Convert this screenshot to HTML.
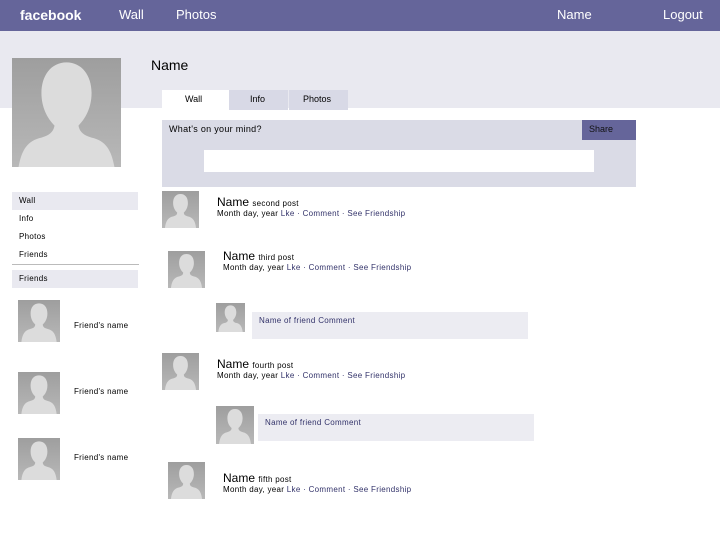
<!DOCTYPE html><html><head><style>
body{margin:0;width:720px;height:540px;position:relative;background:#fff;font-family:"Liberation Sans",sans-serif;overflow:hidden}
div,span{position:absolute}
.t{white-space:nowrap;color:#000}
.av{background:linear-gradient(#9e9e9e,#b8b8b8);overflow:hidden}
.av svg{width:100%;height:100%;display:block}
.s{font-size:8px;letter-spacing:.3px}
.l{color:#33336a}
</style></head><body>
<div style="left:0;top:0;width:720px;height:31px;background:#65659a"></div>
<div class="t" style="left:20px;top:7px;font-size:14px;font-weight:bold;color:#fff">facebook</div>
<div class="t" style="left:119px;top:7px;font-size:13px;color:#fff">Wall</div>
<div class="t" style="left:176px;top:7px;font-size:13px;color:#fff">Photos</div>
<div class="t" style="left:557px;top:7px;font-size:13px;color:#fff">Name</div>
<div class="t" style="left:663px;top:7px;font-size:13px;color:#fff">Logout</div>
<div style="left:0;top:31px;width:720px;height:77px;background:#e9e9f0"></div>
<div class="t" style="left:151px;top:57px;font-size:14px">Name</div>
<div style="left:162px;top:90px;width:67px;height:20px;background:#fff"></div>
<div style="left:229px;top:90px;width:59px;height:20px;background:#d8d9e6"></div>
<div style="left:289px;top:90px;width:59px;height:20px;background:#d8d9e6"></div>
<div class="t" style="left:185px;top:94px;font-size:9px">Wall</div>
<div class="t" style="left:250px;top:94px;font-size:9px">Info</div>
<div class="t" style="left:303px;top:94px;font-size:9px">Photos</div>
<div style="left:162px;top:120px;width:474px;height:67px;background:#dadbe6"></div>
<div class="t" style="left:169px;top:124px;font-size:9px;letter-spacing:.3px">What's on your mind?</div>
<div style="left:582px;top:120px;width:54px;height:20px;background:#65659a"></div>
<div class="t" style="left:589px;top:124px;font-size:9px;color:#111">Share</div>
<div style="left:204px;top:150px;width:390px;height:22px;background:#fff"></div>

<div style="left:12px;top:192px;width:126px;height:18px;background:#e9e9f0"></div>
<div class="t s" style="left:19px;top:196px">Wall</div>
<div class="t s" style="left:19px;top:214px">Info</div>
<div class="t s" style="left:19px;top:232px">Photos</div>
<div class="t s" style="left:19px;top:250px">Friends</div>
<div style="left:12px;top:264px;width:127px;height:1px;background:#bbb"></div>
<div style="left:12px;top:270px;width:126px;height:18px;background:#e9e9f0"></div>
<div class="t s" style="left:19px;top:274px">Friends</div>
<div class="t s" style="left:74px;top:321px">Friend's name</div>
<div class="t s" style="left:74px;top:387px">Friend's name</div>
<div class="t s" style="left:74px;top:453px">Friend's name</div>

<div style="left:252px;top:312px;width:276px;height:27px;background:#ececf2"></div>
<div style="left:258px;top:414px;width:276px;height:27px;background:#ececf2"></div>
<div class="t s l" style="left:259px;top:316px">Name of friend Comment</div>
<div class="t s l" style="left:265px;top:418px">Name of friend Comment</div>

<div class="t" style="left:217px;top:195px;font-size:12px">Name <span class="s" style="position:static">second post</span></div>
<div class="t s" style="left:217px;top:209px">Month day, year <span class="l" style="position:static">Lke · Comment · See Friendship</span></div>
<div class="t" style="left:223px;top:249px;font-size:12px">Name <span class="s" style="position:static">third post</span></div>
<div class="t s" style="left:223px;top:263px">Month day, year <span class="l" style="position:static">Lke · Comment · See Friendship</span></div>
<div class="t" style="left:217px;top:357px;font-size:12px">Name <span class="s" style="position:static">fourth post</span></div>
<div class="t s" style="left:217px;top:371px">Month day, year <span class="l" style="position:static">Lke · Comment · See Friendship</span></div>
<div class="t" style="left:223px;top:471px;font-size:12px">Name <span class="s" style="position:static">fifth post</span></div>
<div class="t s" style="left:223px;top:485px">Month day, year <span class="l" style="position:static">Lke · Comment · See Friendship</span></div>

<div class="av" style="left:12px;top:58px;width:109px;height:109px"><svg viewBox="0 0 100 100"><path fill="#dcdcdc" d="M50 4C36 4 27 16 27 32c0 14 6 24 12 30c-1 6-5 9-12 11C14 76 9 84 6 100h88c-3-16-8-24-21-27c-7-2-11-5-12-11c6-6 12-16 12-30C73 16 64 4 50 4z"/></svg></div>
<div class="av" style="left:18px;top:300px;width:42px;height:42px"><svg viewBox="0 0 100 100"><path fill="#dcdcdc" d="M50 8C37 8 30 18 30 32c0 12 5 21 11 26c0 6-4 9-12 11C16 72 10 82 8 100h84c-2-18-8-28-21-31c-8-2-12-5-12-11c6-5 11-14 11-26C70 18 63 8 50 8z"/></svg></div>
<div class="av" style="left:18px;top:372px;width:42px;height:42px"><svg viewBox="0 0 100 100"><path fill="#dcdcdc" d="M50 8C37 8 30 18 30 32c0 12 5 21 11 26c0 6-4 9-12 11C16 72 10 82 8 100h84c-2-18-8-28-21-31c-8-2-12-5-12-11c6-5 11-14 11-26C70 18 63 8 50 8z"/></svg></div>
<div class="av" style="left:18px;top:438px;width:42px;height:42px"><svg viewBox="0 0 100 100"><path fill="#dcdcdc" d="M50 8C37 8 30 18 30 32c0 12 5 21 11 26c0 6-4 9-12 11C16 72 10 82 8 100h84c-2-18-8-28-21-31c-8-2-12-5-12-11c6-5 11-14 11-26C70 18 63 8 50 8z"/></svg></div>
<div class="av" style="left:162px;top:191px;width:37px;height:37px"><svg viewBox="0 0 100 100"><path fill="#dcdcdc" d="M50 8C37 8 30 18 30 32c0 12 5 21 11 26c0 6-4 9-12 11C16 72 10 82 8 100h84c-2-18-8-28-21-31c-8-2-12-5-12-11c6-5 11-14 11-26C70 18 63 8 50 8z"/></svg></div>
<div class="av" style="left:168px;top:251px;width:37px;height:37px"><svg viewBox="0 0 100 100"><path fill="#dcdcdc" d="M50 8C37 8 30 18 30 32c0 12 5 21 11 26c0 6-4 9-12 11C16 72 10 82 8 100h84c-2-18-8-28-21-31c-8-2-12-5-12-11c6-5 11-14 11-26C70 18 63 8 50 8z"/></svg></div>
<div class="av" style="left:216px;top:303px;width:29px;height:29px"><svg viewBox="0 0 100 100"><path fill="#dcdcdc" d="M50 8C37 8 30 18 30 32c0 12 5 21 11 26c0 6-4 9-12 11C16 72 10 82 8 100h84c-2-18-8-28-21-31c-8-2-12-5-12-11c6-5 11-14 11-26C70 18 63 8 50 8z"/></svg></div>
<div class="av" style="left:162px;top:353px;width:37px;height:37px"><svg viewBox="0 0 100 100"><path fill="#dcdcdc" d="M50 8C37 8 30 18 30 32c0 12 5 21 11 26c0 6-4 9-12 11C16 72 10 82 8 100h84c-2-18-8-28-21-31c-8-2-12-5-12-11c6-5 11-14 11-26C70 18 63 8 50 8z"/></svg></div>
<div class="av" style="left:216px;top:406px;width:38px;height:38px"><svg viewBox="0 0 100 100"><path fill="#dcdcdc" d="M50 8C37 8 30 18 30 32c0 12 5 21 11 26c0 6-4 9-12 11C16 72 10 82 8 100h84c-2-18-8-28-21-31c-8-2-12-5-12-11c6-5 11-14 11-26C70 18 63 8 50 8z"/></svg></div>
<div class="av" style="left:168px;top:462px;width:37px;height:37px"><svg viewBox="0 0 100 100"><path fill="#dcdcdc" d="M50 8C37 8 30 18 30 32c0 12 5 21 11 26c0 6-4 9-12 11C16 72 10 82 8 100h84c-2-18-8-28-21-31c-8-2-12-5-12-11c6-5 11-14 11-26C70 18 63 8 50 8z"/></svg></div>
</body></html>
